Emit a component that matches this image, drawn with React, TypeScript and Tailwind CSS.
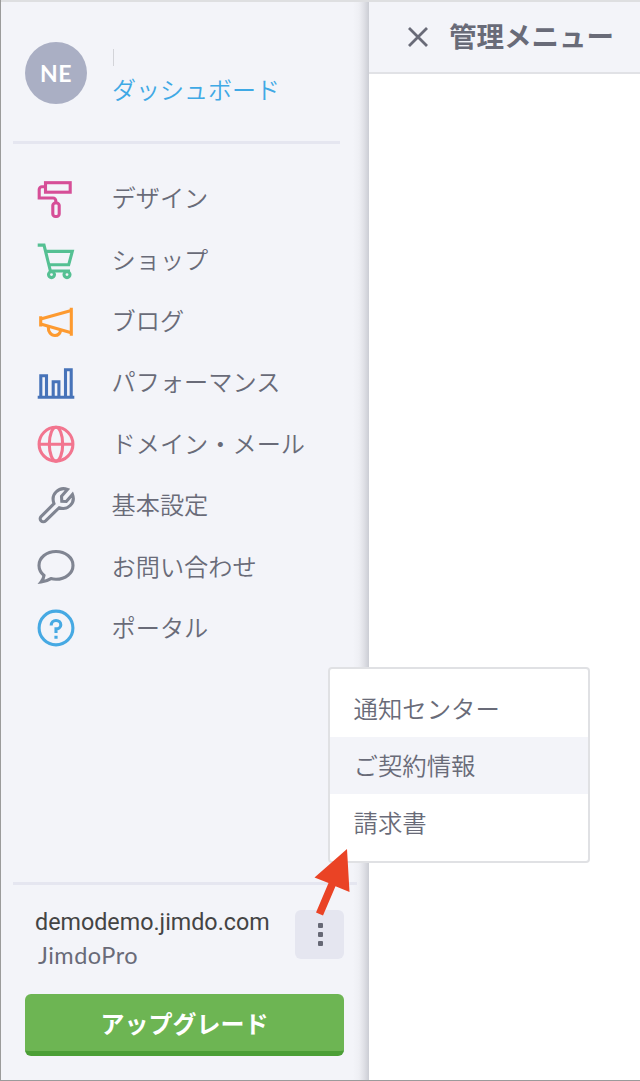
import type { ReactNode } from 'react';

interface MenuItem {
  label: string;
  color: string;
  icon: ReactNode;
}

const menuItems: MenuItem[] = [
  {
    label: 'デザイン',
    color: 'text-[#d64e97]',
    icon: (
      <>
        <rect x="8.5" y="3.7" width="24.7" height="9.5" />
        <path d="M8.5 7.7H5a2.8 2.8 0 0 0-2.8 2.8V19H16a2.8 2.8 0 0 1 2.8 2.8V24" />
        <rect x="15.8" y="24" width="6.4" height="13.5" rx="2.6" />
      </>
    ),
  },
  {
    label: 'ショップ',
    color: 'text-[#55c093]',
    icon: (
      <>
        <path d="M.7 5.1H7L13.4 31H33" />
        <path d="M8.3 11.4h27l-3.6 13.4H12" />
        <circle cx="14.5" cy="34.6" r="3" />
        <circle cx="30" cy="34.6" r="3" />
      </>
    ),
  },
  {
    label: 'ブログ',
    color: 'text-[#fd9a30]',
    icon: (
      <>
        <path d="M3.7 15.2v10.2M34.3 6.7v28" />
        <path d="M3.7 18 34.3 9.4M3.7 23l30.6 8.7" />
        <path d="M11.3 25.5C11 31 14 34.5 18 34.5c2.9 0 5.2-1.8 5.6-5.2" />
      </>
    ),
  },
  {
    label: 'パフォーマンス',
    color: 'text-[#4773b9]',
    icon: (
      <>
        <path d="M.7 34.3h36.6" />
        <path d="M3.8 34.3V12.8h5.7v21.5M16.2 34.3V18.8h5.7v15.5M28.5 34.3V6.8h5.7v27.5" />
      </>
    ),
  },
  {
    label: 'ドメイン・メール',
    color: 'text-[#f2758f]',
    icon: (
      <>
        <circle cx="19" cy="20.2" r="16.9" />
        <ellipse cx="19" cy="20.2" rx="6.7" ry="16.9" />
        <path d="M2 20.2h34" />
      </>
    ),
  },
  {
    label: '基本設定',
    color: 'text-[#808592]',
    icon: (
      <path d="M4 30.6 17 17.700C15.500 13.600 16 9 19 6c3.200-3.200 7.500-4 11.500-2.500l-6 6.700.3 5 4.500.3 6.200-7c1.500 3.700.500 8.200-2.300 11-3 2.900-7.200 3.700-11 2.200L8.600 34.900c-1.300 1.200-3.300 1.200-4.500 0s-1.300-3.100-.1-4.300Z" />
    ),
  },
  {
    label: 'お問い合わせ',
    color: 'text-[#808592]',
    icon: (
      <path d="M7 28.5C4.100 26 2 22.400 2 18.400 2 10.700 9.600 4.500 19 4.500s17 6.200 17 13.900-7.600 13.900-17 13.900c-1.800 0-3.500-.2-5.100-.7-2.900 1.900-6.400 2.900-9.800 3.300 1.600-2 2.600-3.800 2.900-6.400Z" />
    ),
  },
  {
    label: 'ポータル',
    color: 'text-[#46a9e3]',
    icon: (
      <>
        <circle cx="19" cy="20" r="16.9" />
        <path d="M14.2 17.400c0-3 2-4.900 4.800-4.900s4.800 1.800 4.800 4.400c0 2.700-2.800 4-4.800 4v4.200M17.400 29.200h3.200" />
      </>
    ),
  },
];

const popupItems = ['通知センター', 'ご契約情報', '請求書'];

export default function App() {
  return (
    <div className="relative flex w-[640px] h-[1081px] overflow-hidden bg-white border-l border-b border-[#9b9b9b] text-[#696b78] font-['Noto_Sans_CJK_JP',sans-serif]">
      {/* Sidebar */}
      <aside className="flex flex-col w-[368px] shrink-0 border-t-2 border-[#dedfe1] bg-[#f3f4f9] bg-[linear-gradient(to_left,#cbcdd4_0px,#dfe0e6_5px,#eeeff4_10px,#f3f4f9_16px)]">
        <div className="flex h-[139px] mx-3 w-[327px] pl-3 pt-10">
          <div className="flex items-center justify-center w-[62px] h-[62px] rounded-full bg-[#aaafc4] text-white text-[23px] tracking-[0.5px] font-bold font-[Lato,sans-serif]">
            NE
          </div>
          <div className="ml-[25px] pt-[7px]">
            <div className="ml-px w-px h-[17px] bg-[#d3d4d9]" />
            <a href="#" className="block mt-[5px] text-[24px] leading-[36px] font-[350] text-[#3fa9e5] whitespace-nowrap">
              ダッシュボード
            </a>
          </div>
        </div>
        <div className="mx-3 w-[327px] h-[3px] shrink-0 bg-[#e5e6f0]" />

        <nav className="pt-[24px]">
          {menuItems.map((item) => (
            <a key={item.label} href="#" className="flex items-center h-[61.4px] pl-9">
              <svg
                className={`w-[38px] h-10 overflow-visible ${item.color}`}
                viewBox="0 0 38 40"
                fill="none"
                stroke="currentColor"
                strokeWidth={3.1}
              >
                {item.icon}
              </svg>
              <span className="ml-[36.500px] pb-[3px] text-[24.200px] leading-[36px] font-[350]">{item.label}</span>
            </a>
          ))}
        </nav>

        {/* Account */}
        <div className="mt-auto ml-3 w-[344px] h-[3px] shrink-0 bg-[#e5e6f0]" />
        <div className="flex justify-between pl-[34px] pr-[25px] pt-[25px] h-[109px]">
          <div className="-mt-0.5 whitespace-nowrap">
            <div className="text-[23.3px] leading-7 text-[#444444] font-[Roboto,sans-serif]">demodemo.jimdo.com</div>
            <div className="pl-[3px] mt-[3px] text-[23.5px] leading-8 tracking-[0.5px] font-[Lato,sans-serif]">JimdoPro</div>
          </div>
          <button className="flex flex-col items-center justify-center gap-[4px] w-[49px] h-[49px] pl-px rounded-md bg-[#e5e6f0]">
            <span className="w-[5px] h-[5px] rounded-[1px] bg-[#666875]" />
            <span className="w-[5px] h-[5px] rounded-[1px] bg-[#666875]" />
            <span className="w-[5px] h-[5px] rounded-[1px] bg-[#666875]" />
          </button>
        </div>
        <button className="mx-6 mb-[24px] w-[319px] h-[62px] shrink-0 rounded-md border-b-[5px] border-[#4b9f36] bg-[#6db553] text-white text-[24px] font-bold">
          アップグレード
        </button>
      </aside>

      {/* Content */}
      <main className="flex-1">
        <header className="flex items-center h-[74px] pl-[39px] border-t-2 border-b-2 border-t-[#dedfe1] border-b-[#e1e2e6] bg-[#f3f4f9]">
          <svg className="w-5 h-5" viewBox="0 0 20 20" fill="none" stroke="currentColor" strokeWidth={2.8}>
            <path d="m1 1 18 18M19 1 1 19" />
          </svg>
          <h1 className="ml-[21px] pb-1 text-[27.5px] leading-10 font-bold whitespace-nowrap">管理メニュー</h1>
        </header>
      </main>

      {/* Popup menu */}
      <div className="absolute left-[327px] top-[667px] w-[262px] h-[196px] pt-[11px] rounded-[4px] border-2 border-[#e0e1e4] bg-white">
        {popupItems.map((label) => (
          <a
            key={label}
            href="#"
            className={`flex items-center h-[57px] pl-[23.500px] pb-px text-[24.400px] font-[350] ${
              label === 'ご契約情報' ? 'bg-[#f3f4f9]' : ''
            }`}
          >
            {label}
          </a>
        ))}
      </div>

      {/* Pointer arrow */}
      <svg className="absolute left-[313px] top-[848px] w-[38px] h-[70px]" viewBox="0 0 38 70" fill="#ea4325">
        <path d="M33 1 35.5 44 21.5 38.3 9 67.5 2 64.5 14.5 35 .5 29.5Z" />
      </svg>
    </div>
  );
}
